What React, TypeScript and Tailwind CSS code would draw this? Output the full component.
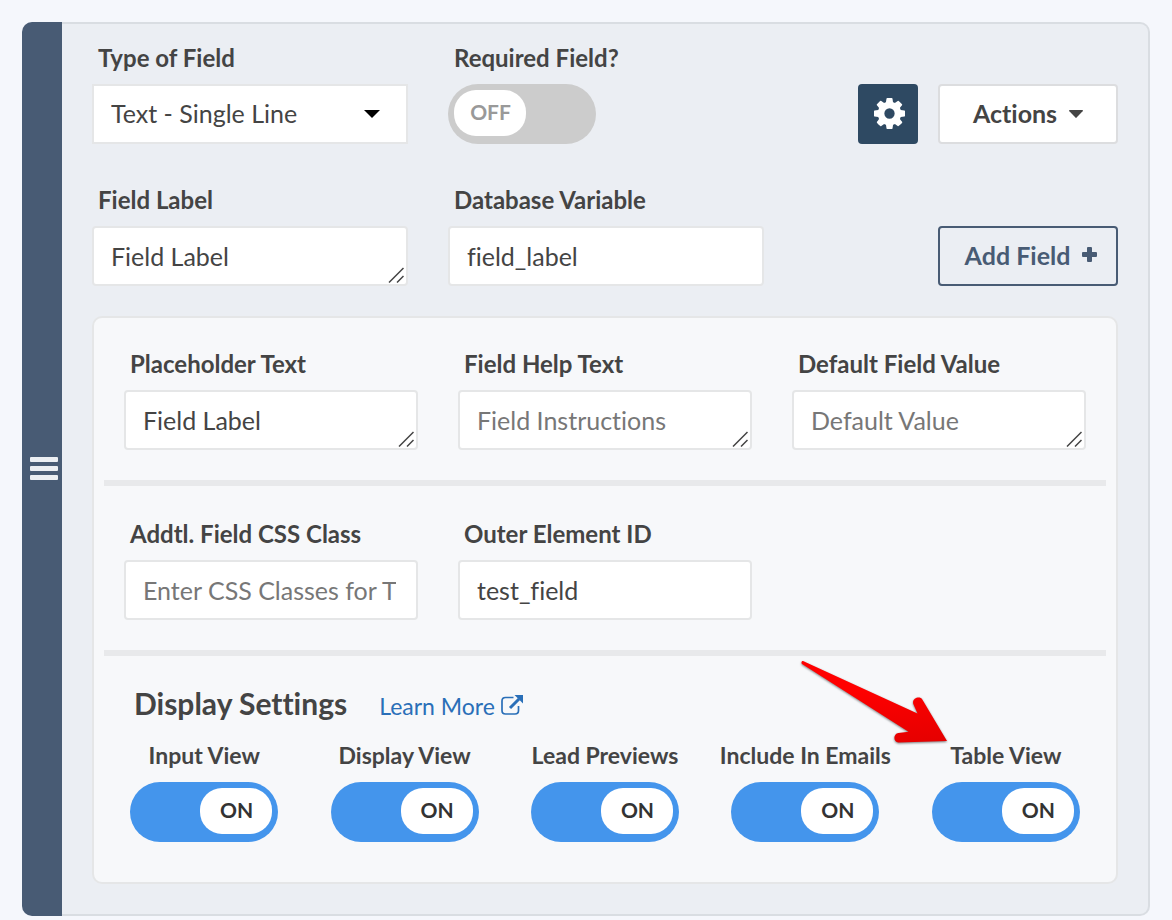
import { useId, type ReactNode } from 'react';

const control =
  'block h-[60px] w-full rounded border-2 border-[#e5e6e7] bg-white pr-5 pl-[17px] text-[25px] text-[#444] placeholder:text-[#777] outline-none';

function Label({ htmlFor, children }: { htmlFor: string; children: ReactNode }) {
  return (
    <label htmlFor={htmlFor} className="mb-3 block pl-1.5 text-2xl leading-7 font-bold whitespace-nowrap text-[#444]">
      {children}
    </label>
  );
}

function TextField({ label, value, placeholder }: { label: string; value?: string; placeholder?: string }) {
  const id = useId();
  return (
    <div className="min-w-0">
      <Label htmlFor={id}>{label}</Label>
      <input id={id} type="text" defaultValue={value} placeholder={placeholder} className={control} />
    </div>
  );
}

function AreaField({ label, value, placeholder }: { label: string; value?: string; placeholder?: string }) {
  const id = useId();
  return (
    <div className="min-w-0">
      <Label htmlFor={id}>{label}</Label>
      <div className="relative">
        <textarea
          id={id}
          rows={1}
          defaultValue={value}
          placeholder={placeholder}
          className={control + ' resize-none overflow-hidden pt-3 leading-8'}
        />
        <svg viewBox="0 0 16 16" className="pointer-events-none absolute right-1 bottom-[3px] size-4" aria-hidden="true">
          <path d="M1 15.500L15.500 1M9 15.500L15.500 9" stroke="#444" strokeWidth="1.500" fill="none" />
        </svg>
      </div>
    </div>
  );
}

function Toggle({ id, on }: { id: string; on: boolean }) {
  return (
    <span className="relative block h-[60px] w-[148px]">
      <input
        id={id}
        type="checkbox"
        defaultChecked={on}
        className="peer absolute inset-0 z-10 size-full cursor-pointer opacity-0"
      />
      <span className="flex size-full items-start rounded-full bg-[#ccc] p-1.5 text-[#999] peer-checked:justify-end peer-checked:bg-[#4495ec] peer-checked:text-[#333]">
        <span className="flex h-[46px] w-[72px] items-center justify-center rounded-[22px] bg-white pb-1 pl-px text-[21px] leading-none font-bold">
          {on ? 'ON' : 'OFF'}
        </span>
      </span>
    </span>
  );
}

function GearIcon() {
  return (
    <svg viewBox="0 128 1536 1536" className="size-[31px]" fill="currentColor" aria-hidden="true">
      <path d="M1024 896q0-106-75-181t-181-75-181 75-75 181 75 181 181 75 181-75 75-181zm512-109v222q0 12-8 23t-20 13l-185 28q-19 54-39 91 35 50 107 138 10 12 10 25t-9 23q-27 37-99 108t-94 71q-12 0-26-9l-138-108q-44 23-91 38-16 136-29 186-7 28-36 28h-222q-14 0-24.500-8.500t-11.500-21.500l-28-184q-49-16-90-37l-141 107q-10 9-25 9-14 0-25-11-126-114-165-168-7-10-7-23 0-12 8-23 15-21 51-66.500t54-70.500q-27-50-41-99l-183-27q-13-2-21-12.500t-8-23.500v-222q0-12 8-23t19-13l186-28q14-46 39-92-40-57-107-138-10-12-10-24 0-10 9-23 26-36 98.500-107.500t94.500-71.500q13 0 26 10l138 107q44-23 91-38 16-136 29-186 7-28 36-28h222q14 0 24.500 8.500t11.500 21.500l28 184q49 16 90 37l142-107q9-9 24-9 13 0 25 10 129 119 165 170 7 8 7 22 0 12-8 23-15 21-51 66.500t-54 70.500q26 50 41 98l183 28q13 2 21 12.500t8 23.500z" />
    </svg>
  );
}

function Pointer() {
  return (
    <svg
      viewBox="0 0 150 88"
      className="pointer-events-none absolute -top-[84px] -left-[106px] h-[88px] w-[150px] drop-shadow-[0_1px_1px_rgba(0,0,0,0.5)]"
      aria-hidden="true"
    >
      <defs>
        <linearGradient id="pointer-fill" x1="0.600" y1="0.300" x2="0.750" y2="1">
          <stop offset="0" stopColor="#ff0000" />
          <stop offset="1" stopColor="#e60000" />
        </linearGradient>
      </defs>
      <path
        d="M3.500 3.200L117.500 55.500L113.300 46C111.500 40 120 37.500 122.300 41.500L147 83L98.500 84.500C93 84.300 93 75.500 98.500 75L108.500 73.800L2 6C.8 4.600 1.800 2.600 3.500 3.200Z"
        fill="url(#pointer-fill)"
      />
    </svg>
  );
}

const views = ['Input View', 'Display View', 'Lead Previews', 'Include In Emails', 'Table View'];

export default function App() {
  return (
    <main className="min-h-screen bg-[#f5f7fc] px-[22px] pt-[22px] pb-1 font-['Lato',sans-serif] text-[#444] [font-variant-ligatures:none]">
      <section className="flex">
        <button
          type="button"
          aria-label="Reorder field"
          className="flex w-10 shrink-0 flex-col items-center justify-center gap-1 rounded-l-[10px] bg-[#485b74] pb-0.5 pl-1"
        >
          <span className="h-[5px] w-7 rounded-[1px] bg-[#eceff3]" />
          <span className="h-[5px] w-7 rounded-[1px] bg-[#eceff3]" />
          <span className="h-[5px] w-7 rounded-[1px] bg-[#eceff3]" />
        </button>

        <div className="min-w-0 flex-1 rounded-r-[10px] border-2 border-l-0 border-[#d9dde2] bg-[#ebeef3] px-[30px] pt-5 pb-[30px]">
          <div className="grid grid-cols-[316fr_316fr_314fr] gap-x-10 gap-y-[42px]">
            <div className="min-w-0">
              <Label htmlFor="field-type">Type of Field</Label>
              <div className="relative">
                <select id="field-type" className={control + ' appearance-none rounded-none'}>
                  <option>Text - Single Line</option>
                </select>
                <svg viewBox="0 0 16 8" className="pointer-events-none absolute top-[26px] right-7 h-2 w-4" aria-hidden="true">
                  <path d="M0 0H16L8 8Z" fill="#000" />
                </svg>
              </div>
            </div>
            <div className="min-w-0">
              <Label htmlFor="required-field">Required Field?</Label>
              <Toggle id="required-field" on={false} />
            </div>
            <div className="flex items-end justify-end gap-5">
              <button
                type="button"
                aria-label="Field settings"
                className="flex size-[60px] items-center justify-center rounded bg-[#2e4962] pb-0.5 pl-0.5 text-white"
              >
                <GearIcon />
              </button>
              <button
                type="button"
                className="flex h-[60px] w-[180px] items-center justify-center gap-3 rounded border-2 border-[#dcdddf] bg-white text-[25px] font-bold"
              >
                Actions
                <svg viewBox="0 0 14 8" className="h-2 w-3.5" fill="currentColor" aria-hidden="true">
                  <path d="M.6 0H13.400Q14.400.3 13.600 1.200L7.600 7.600Q7 8.200 6.400 7.600L.4 1.200Q-.4.300.6 0Z" />
                </svg>
              </button>
            </div>

            <AreaField label="Field Label" value="Field Label" />
            <TextField label="Database Variable" value="field_label" />
            <div className="flex items-end justify-end">
              <button
                type="button"
                className="flex h-[60px] w-[180px] items-center justify-center gap-3 rounded border-2 border-[#485b74] pl-1.5 text-[25px] font-bold text-[#485b74]"
              >
                Add Field
                <svg viewBox="0 0 15 15" className="mb-1 size-[15px]" fill="currentColor" aria-hidden="true">
                  <path d="M6 0H9Q10 0 10 1V5H14Q15 5 15 6V9Q15 10 14 10H10V14Q10 15 9 15H6Q5 15 5 14V10H1Q0 10 0 9V6Q0 5 1 5H5V1Q5 0 6 0Z" />
                </svg>
              </button>
            </div>
          </div>

          <div className="mt-[30px] rounded-[10px] border-2 border-[#e5e6e7] bg-[#f7f8fa] px-2.5 pt-8 pb-10">
            <div className="grid grid-cols-3 gap-10 px-5 pb-[30px]">
              <AreaField label="Placeholder Text" value="Field Label" />
              <AreaField label="Field Help Text" placeholder="Field Instructions" />
              <AreaField label="Default Field Value" placeholder="Default Value" />
            </div>
            <hr className="border-t-[6px] border-[#e8e9eb]" />
            <div className="grid grid-cols-3 gap-10 px-5 pt-[34px] pb-[30px]">
              <TextField label="Addtl. Field CSS Class" placeholder="Enter CSS Classes for This Field" />
              <TextField label="Outer Element ID" value="test_field" />
            </div>
            <hr className="border-t-[6px] border-[#e8e9eb]" />
            <div className="flex items-baseline gap-8 px-[30px] pt-[27px] pb-[19px]">
              <h2 className="text-[30px] leading-10 font-bold">Display Settings</h2>
              <a href="#learn-more" className="flex items-center gap-1.5 text-[23px] leading-8 text-[#2a6fb8]">
                Learn More
                <svg viewBox="0 0 22 20" className="mb-0.5 h-5 w-[22px]" fill="none" stroke="currentColor" aria-hidden="true">
                  <path d="M12.500 2.500H4.500Q1 2.500 1 6V15.500Q1 19 4.500 19H14Q17.500 19 17.500 15.500V11" strokeWidth="1.700" />
                  <path d="M9 13L18 4" strokeWidth="3" />
                  <path d="M13.500 0H22V8.500Z" fill="currentColor" stroke="none" />
                </svg>
              </a>
            </div>
            <div className="grid grid-cols-5">
              {views.map((view, i) => (
                <div key={view} className="relative flex flex-col items-center">
                  <label htmlFor={'view-' + i} className="mb-3.5 text-[23px] leading-[26px] font-bold whitespace-nowrap">
                    {view}
                  </label>
                  <Toggle id={'view-' + i} on />
                  {view === 'Table View' && <Pointer />}
                </div>
              ))}
            </div>
          </div>
        </div>
      </section>
    </main>
  );
}
